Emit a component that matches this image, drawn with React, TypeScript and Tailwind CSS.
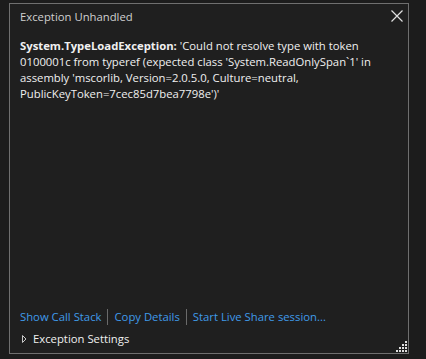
import React from "react";

const font = { fontFamily: '"Segoe UI", "Open Sans", "Noto Sans", sans-serif' };

function Grip() {
  const dots: [number, number][] = [];
  for (let r = 0; r < 4; r++) {
    for (let c = 3 - r; c < 4; c++) dots.push([c * 3, r * 3]);
  }
  return (
    <svg width="11" height="11" viewBox="0 0 11 11" className="absolute right-[1px] bottom-[1px]">
      {dots.map(([x, y], i) => (
        <rect key={i} x={x} y={y} width="2" height="2" fill="#e0e0e0" />
      ))}
    </svg>
  );
}

export default function App() {
  return (
    <div className="w-[426px] h-[359px] bg-[#1c1c1c] pt-[3px] pl-[9px]" style={font}>
      <div className="relative w-[400px] h-[351px] border border-[#6f6f6f] bg-[#1f1f1f] flex flex-col text-[11.3px]">
        <div className="flex items-start justify-between pl-[10px] pr-[4px] pt-[5px]">
          <span className="text-[#d0d0d0] leading-[16px]">Exception Unhandled</span>
          <svg width="12" height="12" viewBox="0 0 12 12" className="mt-[1px] mr-[1px]">
            <path d="M0.5 0.5L11.5 11.5M11.5 0.5L0.5 11.5" stroke="#e0e0e0" strokeWidth="1.2" />
          </svg>
        </div>
        <div className="pl-[10px] pr-[10px] mt-[13px] text-[#f0f0f0] leading-[16px] whitespace-nowrap">
          <span className="font-bold">System.TypeLoadException:</span> 'Could not resolve type with token
          <br />
          0100001c from typeref (expected class 'System.ReadOnlySpan`1' in
          <br />
          assembly 'mscorlib, Version=2.0.5.0, Culture=neutral,
          <br />
          PublicKeyToken=7cec85d7bea7798e')'
        </div>
        <div className="flex-1" />
        <div className="flex items-center pl-[10px] text-[#3f9bea] leading-[16px]">
          <span>Show Call Stack</span>
          <span className="mx-[6px] w-px h-[16px] bg-[#6a6a6a]" />
          <span>Copy Details</span>
          <span className="mx-[6px] w-px h-[16px] bg-[#6a6a6a]" />
          <span>Start Live Share session...</span>
        </div>
        <div className="flex items-center pl-[12px] mt-[6px] mb-[6px] text-[#f0f0f0] leading-[16px]">
          <svg width="5" height="8" viewBox="0 0 5 8" className="mr-[6px]">
            <path d="M0.5 0.5L4 4L0.5 7.5Z" fill="none" stroke="#c8c8c8" strokeWidth="1" />
          </svg>
          <span>Exception Settings</span>
        </div>
        <Grip />
      </div>
    </div>
  );
}
